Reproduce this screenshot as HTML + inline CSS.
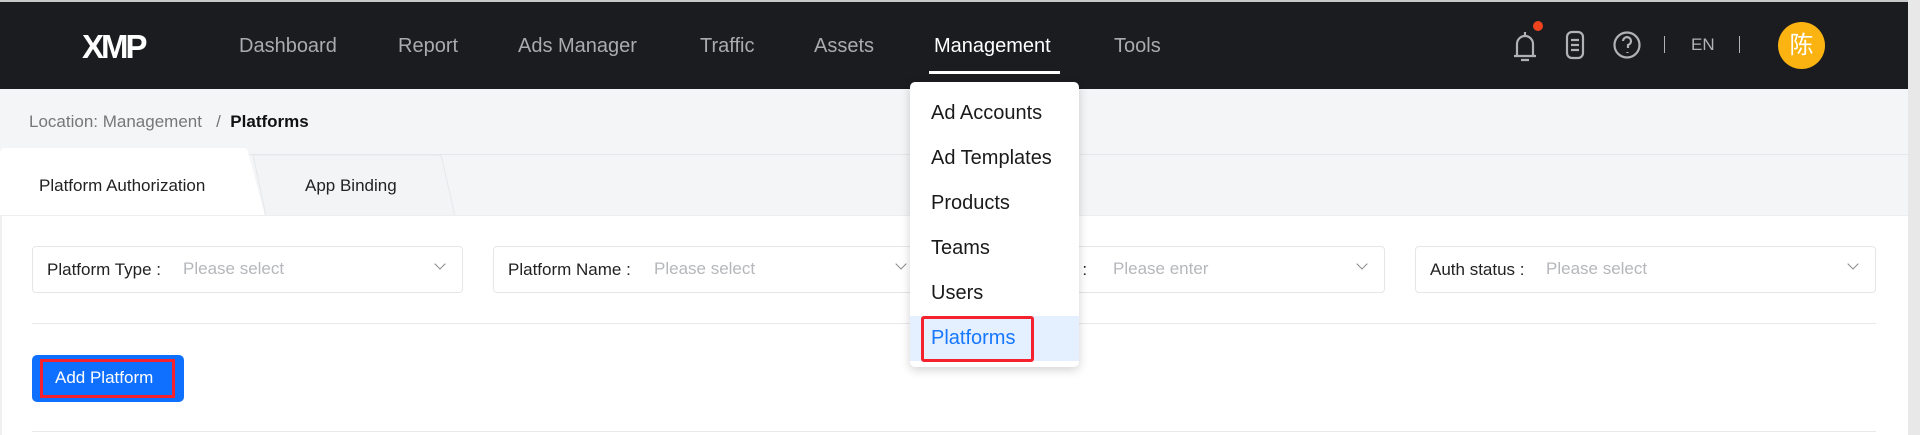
<!DOCTYPE html>
<html><head><meta charset="utf-8"><style>
*{margin:0;padding:0;box-sizing:border-box}
body{width:1920px;height:435px;overflow:hidden;position:relative;background:#fff;font-family:"Liberation Sans","Noto Sans CJK SC",sans-serif;}
.abs{position:absolute}
.nav{left:0;top:0;width:1908px;height:89px;background:#1a1c20;border-top:2px solid #c8c8c8}
.ni{position:absolute;top:35px;font-size:20px;color:#a9abb0;white-space:nowrap}
.crumb{left:0;top:89px;width:1908px;height:126px;background:#f4f5f7}
.sel{position:absolute;top:246px;height:47px;border:1px solid #e4e6ea;border-radius:4px;background:#fff;font-size:17px}
.sel .l{position:absolute;left:14px;top:13px;color:#222}
.sel .p{position:absolute;top:12px;color:#b5b7bb}
.sel .c{position:absolute;right:18px;top:13px;width:8px;height:8px;border-right:1.3px solid #888;border-bottom:1.3px solid #888;transform:rotate(45deg)}
.dd{left:910px;top:82px;width:169px;height:285px;background:#fff;border-radius:5px;box-shadow:0 3px 10px rgba(0,0,0,.18)}
.di{position:absolute;left:21px;font-size:20px;color:#1a1a1a}
</style></head><body>
<div class="abs nav"></div>
<div class="abs" style="left:82px;top:28px;font-size:33px;font-weight:bold;color:#fff;letter-spacing:-3px;font-family:'Liberation Sans',sans-serif">XMP</div>
<div class="ni" style="left:239px">Dashboard</div>
<div class="ni" style="left:398px">Report</div>
<div class="ni" style="left:518px">Ads Manager</div>
<div class="ni" style="left:700px">Traffic</div>
<div class="ni" style="left:814px">Assets</div>
<div class="ni" style="left:934px;color:#fff">Management</div>
<div class="ni" style="left:1114px">Tools</div>
<div class="abs" style="left:929px;top:71px;width:131px;height:3px;background:#fff"></div>
<svg class="abs" style="left:1510px;top:27px" width="140" height="36" viewBox="0 0 140 36" fill="none" stroke="#b0b2b6" stroke-width="2.2">
<path d="M7 29 V17 a8 8 0 0 1 16 0 V29 Z M4 29 H26 M11 33 H19 M15 5 V9"/>
<rect x="57" y="5" width="16" height="26" rx="5"/><path d="M61 13H69M61 18H69M61 23H69"/>
<circle cx="117" cy="18" r="12.5"/><path d="M113 14a4 4 0 1 1 5 4v3M117.5 25v1"/>
</svg>
<div class="abs" style="left:1533px;top:21px;width:10px;height:10px;border-radius:50%;background:#f0441f"></div>
<div class="abs" style="left:1664px;top:36px;width:1px;height:17px;background:#b0b2b6"></div>
<div class="abs" style="left:1691px;top:35px;font-size:17px;color:#b0b2b6">EN</div>
<div class="abs" style="left:1739px;top:36px;width:1px;height:17px;background:#b0b2b6"></div>
<div class="abs" style="left:1778px;top:22px;width:47px;height:47px;border-radius:50%;background:#fbb312;color:#fff;font-size:24px;text-align:center;line-height:47px">陈</div>
<div class="abs" style="left:1908px;top:0;width:12px;height:435px;background:#e8e8e8"></div>
<div class="abs crumb"></div>
<div class="abs" style="left:29px;top:112px;font-size:17px;color:#777">Location: Management &nbsp; / &nbsp;<b style="color:#111">Platforms</b></div>
<div class="abs" style="left:0;top:154px;width:1908px;height:1px;background:#e6e7ea"></div>
<svg class="abs" style="left:0;top:148px" width="460" height="68"><path d="M253 7 H438 a4 4 0 0 1 4 4 L455 68 H266 Z" fill="#f3f4f6" stroke="#e6e7ea"/><path d="M0 68 V5 a5 5 0 0 1 5-5 H244 a4 4 0 0 1 4 4 L265 68 Z" fill="#fff"/></svg>
<div class="abs" style="left:39px;top:176px;font-size:17px;color:#222">Platform Authorization</div>
<div class="abs" style="left:305px;top:176px;font-size:17px;color:#222">App Binding</div>
<div class="abs" style="left:0;top:215px;width:1908px;height:1px;background:#eceef0"></div>
<div class="abs" style="left:0;top:215px;width:2px;height:220px;background:#f0f0f0"></div>
<div class="sel" style="left:32px;width:431px"><span class="l">Platform Type :</span><span class="p" style="left:150px">Please select</span><span class="c"></span></div>
<div class="sel" style="left:493px;width:431px"><span class="l">Platform Name :</span><span class="p" style="left:160px">Please select</span><span class="c"></span></div>
<div class="sel" style="left:954px;width:431px"><span class="l">Platform Code :</span><span class="p" style="left:158px">Please enter</span><span class="c"></span></div>
<div class="sel" style="left:1415px;width:461px"><span class="l">Auth status :</span><span class="p" style="left:130px">Please select</span><span class="c"></span></div>
<div class="abs" style="left:32px;top:323px;width:1844px;height:1px;background:#e8e9ec"></div>
<div class="abs" style="left:32px;top:355px;width:152px;height:47px;background:#0f6fff;border-radius:5px"></div>
<div class="abs" style="left:40px;top:359px;width:135px;height:39px;border:3px solid #f5222d"></div>
<div class="abs" style="left:55px;top:368px;font-size:17px;color:#fff">Add Platform</div>
<div class="abs" style="left:32px;top:431px;width:1844px;height:1px;background:#e8e9ec"></div>
<div class="abs dd">
<div class="di" style="top:20px">Ad Accounts</div>
<div class="di" style="top:65px">Ad Templates</div>
<div class="di" style="top:110px">Products</div>
<div class="di" style="top:155px">Teams</div>
<div class="di" style="top:200px">Users</div>
<div style="position:absolute;left:0;top:234px;width:169px;height:45px;background:#e4efff"></div>
<div style="position:absolute;left:11px;top:234px;width:113px;height:46px;border:3px solid #f5222d;border-radius:3px"></div>
<div class="di" style="top:245px;color:#1677ff">Platforms</div>
</div>
</body></html>
